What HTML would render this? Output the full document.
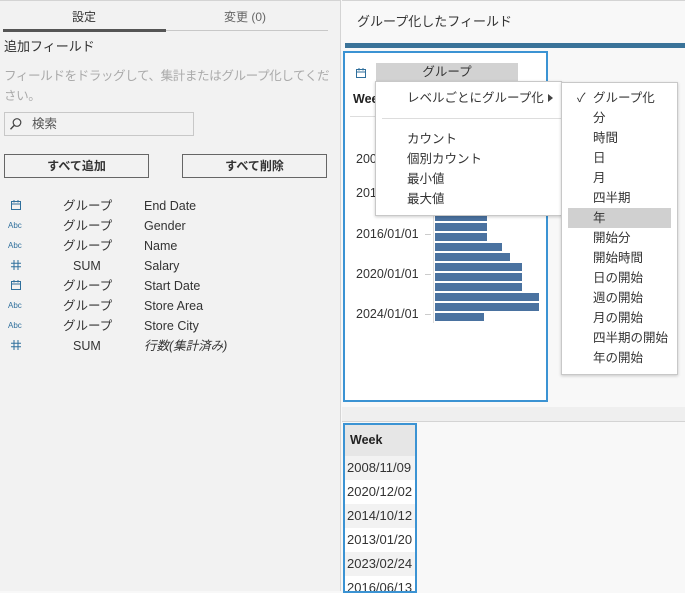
<!DOCTYPE html>
<html><head><meta charset="utf-8"><style>
*{margin:0;padding:0;box-sizing:border-box}
body{width:685px;height:591px;overflow:hidden;position:relative;background:#f8f8f8;font-family:"Liberation Sans","Noto Sans CJK JP",sans-serif;font-size:12px;color:#333}
.a{position:absolute;white-space:nowrap}
.t{line-height:16px}
.f{font-size:12.5px}
</style></head><body>
<div class="a" style="left:0;top:0;width:341px;height:591px;background:#f2f2f2;border-top:1px solid #d4d4d4;border-right:1px solid #d4d4d4"></div>
<div class="a t" style="left:72px;top:9px;color:#333">設定</div>
<div class="a t" style="left:224px;top:9px;color:#666">変更 (0)</div>
<div class="a" style="left:3px;top:29px;width:163px;height:3px;background:#555"></div>
<div class="a" style="left:166px;top:30px;width:162px;height:1px;background:#c8c8c8"></div>
<div class="a t" style="left:4px;top:39px;font-size:13px;color:#333">追加フィールド</div>
<div class="a t" style="left:4px;top:66px;font-size:12.6px;color:#aaa;line-height:20px;letter-spacing:-0.45px">フィールドをドラッグして、集計またはグループ化してくだ<br>さい。</div>
<div class="a" style="left:4px;top:112px;width:190px;height:24px;border:1px solid #c8c8c8;background:#f2f2f2"></div>
<svg class="a" style="left:9px;top:117px" width="14" height="14" viewBox="0 0 14 14"><circle cx="8" cy="5.5" r="3.8" fill="none" stroke="#444" stroke-width="1.2"/><path d="M5.3 8.3 1.5 12.2" stroke="#444" stroke-width="1.4"/></svg>
<div class="a t f" style="left:32px;top:116px;color:#555">検索</div>
<div class="a" style="left:4px;top:154px;width:145px;height:24px;border:1px solid #666;background:#f2f2f2;text-align:center;line-height:22px;font-weight:bold;color:#333">すべて追加</div>
<div class="a" style="left:182px;top:154px;width:145px;height:24px;border:1px solid #666;background:#f2f2f2;text-align:center;line-height:22px;font-weight:bold;color:#333">すべて削除</div>

<svg width="0" height="0" style="position:absolute"><defs>
<symbol id="cal" viewBox="0 0 12 12"><rect x="1.5" y="2.5" width="9" height="8" fill="none" stroke="#2f6f9c" stroke-width="1"/><path d="M1.5 5h9M4 1v2.5M8 1v2.5" stroke="#2f6f9c" stroke-width="1"/></symbol>
<symbol id="hash" viewBox="0 0 12 12"><path d="M4 1v10M8 1v10M1 4.2h10M1 7.8h10" stroke="#2f6f9c" stroke-width="1"/></symbol>
</defs></svg>
<div class="a f" style="left:0;top:197px;width:340px">
<div style="position:relative;height:20px"><svg class="a" style="left:10px;top:2px" width="12" height="12"><use href="#cal"/></svg><span class="a t" style="left:63px;top:1px">グループ</span><span class="a t" style="left:144px;top:1px">End Date</span></div>
<div style="position:relative;height:20px"><span class="a" style="left:8px;top:4px;font-size:8px;color:#2f6f9c">Abc</span><span class="a t" style="left:63px;top:1px">グループ</span><span class="a t" style="left:144px;top:1px">Gender</span></div>
<div style="position:relative;height:20px"><span class="a" style="left:8px;top:4px;font-size:8px;color:#2f6f9c">Abc</span><span class="a t" style="left:63px;top:1px">グループ</span><span class="a t" style="left:144px;top:1px">Name</span></div>
<div style="position:relative;height:20px"><svg class="a" style="left:10px;top:2px" width="12" height="12"><use href="#hash"/></svg><span class="a t" style="left:73px;top:1px">SUM</span><span class="a t" style="left:144px;top:1px">Salary</span></div>
<div style="position:relative;height:20px"><svg class="a" style="left:10px;top:2px" width="12" height="12"><use href="#cal"/></svg><span class="a t" style="left:63px;top:1px">グループ</span><span class="a t" style="left:144px;top:1px">Start Date</span></div>
<div style="position:relative;height:20px"><span class="a" style="left:8px;top:4px;font-size:8px;color:#2f6f9c">Abc</span><span class="a t" style="left:63px;top:1px">グループ</span><span class="a t" style="left:144px;top:1px">Store Area</span></div>
<div style="position:relative;height:20px"><span class="a" style="left:8px;top:4px;font-size:8px;color:#2f6f9c">Abc</span><span class="a t" style="left:63px;top:1px">グループ</span><span class="a t" style="left:144px;top:1px">Store City</span></div>
<div style="position:relative;height:20px"><svg class="a" style="left:10px;top:2px" width="12" height="12"><use href="#hash"/></svg><span class="a t" style="left:73px;top:1px">SUM</span><span class="a t" style="left:144px;top:1px;font-style:italic">行数(集計済み)</span></div>
</div>

<div class="a" style="left:342px;top:0;width:343px;height:1px;background:#d4d4d4"></div>
<div class="a t" style="left:357px;top:14px;font-size:13px">グループ化したフィールド</div>
<div class="a" style="left:345px;top:43px;width:340px;height:5px;background:#3a7399"></div>
<div class="a" style="left:343px;top:51px;width:205px;height:351px;border:2px solid #3b93d3;background:#fff"></div>
<svg class="a" style="left:355px;top:67px" width="12" height="12"><use href="#cal"/></svg>
<div class="a f" style="left:376px;top:63px;width:142px;height:18px;background:#d2d2d2;text-align:center;line-height:18px">グループ</div>
<div class="a t f" style="left:353px;top:91px;font-weight:bold;color:#222">Weel</div>
<div class="a" style="left:350px;top:116px;width:30px;height:1px;background:#ddd"></div>
<div class="a" style="left:433px;top:116px;width:1px;height:207px;background:#ddd"></div>
<div class="a t f" style="left:356px;top:151px">2008/01/01</div>
<div class="a t f" style="left:356px;top:185px">2012/01/01</div>
<div class="a t f" style="left:356px;top:226px">2016/01/01</div>
<div class="a t f" style="left:356px;top:266px">2020/01/01</div>
<div class="a t f" style="left:356px;top:306px">2024/01/01</div>
<div class="a" style="left:425px;top:234px;width:6px;height:1px;background:#ccc"></div>
<div class="a" style="left:425px;top:274px;width:6px;height:1px;background:#ccc"></div>
<div class="a" style="left:425px;top:314px;width:6px;height:1px;background:#ccc"></div>
<div class="a" style="left:435px;top:213px;width:52px;height:8px;background:#4a72a0"></div>
<div class="a" style="left:435px;top:223px;width:52px;height:8px;background:#4a72a0"></div>
<div class="a" style="left:435px;top:233px;width:52px;height:8px;background:#4a72a0"></div>
<div class="a" style="left:435px;top:243px;width:67px;height:8px;background:#4a72a0"></div>
<div class="a" style="left:435px;top:253px;width:75px;height:8px;background:#4a72a0"></div>
<div class="a" style="left:435px;top:263px;width:87px;height:8px;background:#4a72a0"></div>
<div class="a" style="left:435px;top:273px;width:87px;height:8px;background:#4a72a0"></div>
<div class="a" style="left:435px;top:283px;width:87px;height:8px;background:#4a72a0"></div>
<div class="a" style="left:435px;top:293px;width:104px;height:8px;background:#4a72a0"></div>
<div class="a" style="left:435px;top:303px;width:104px;height:8px;background:#4a72a0"></div>
<div class="a" style="left:435px;top:313px;width:49px;height:8px;background:#4a72a0"></div>

<div class="a" style="left:375px;top:81px;width:187px;height:135px;background:#fff;border:1px solid #c8c8c8;box-shadow:0 1px 3px rgba(0,0,0,.2)"></div>
<div class="a t f" style="left:407px;top:90px">レベルごとにグループ化</div>
<div class="a" style="left:548px;top:94px;width:0;height:0;border-left:5px solid #444;border-top:4px solid transparent;border-bottom:4px solid transparent"></div>
<div class="a" style="left:382px;top:118px;width:179px;height:1px;background:#ddd"></div>
<div class="a t f" style="left:407px;top:131px">カウント</div>
<div class="a t f" style="left:407px;top:151px">個別カウント</div>
<div class="a t f" style="left:407px;top:171px">最小値</div>
<div class="a t f" style="left:407px;top:191px">最大値</div>

<div class="a" style="left:561px;top:82px;width:117px;height:293px;background:#fff;border:1px solid #c8c8c8;box-shadow:0 1px 3px rgba(0,0,0,.2)"></div>
<div class="a" style="left:568px;top:208px;width:103px;height:20px;background:#d0d0d0"></div>
<div class="a t f" style="left:577px;top:90px">✓</div>
<div class="a f" style="left:593px;top:88px;line-height:20px">グループ化<br>分<br>時間<br>日<br>月<br>四半期<br>年<br>開始分<br>開始時間<br>日の開始<br>週の開始<br>月の開始<br>四半期の開始<br>年の開始</div>

<div class="a" style="left:342px;top:407px;width:343px;height:15px;background:#efefef;border-bottom:1px solid #d4d4d4"></div>
<div class="a" style="left:343px;top:423px;width:74px;height:170px;border:2px solid #3b93d3;background:#fff;overflow:hidden;font-size:13px">
<div style="height:31px;background:#e6e6e6;font-weight:bold;line-height:31px;padding-left:5px;color:#222;font-size:12.5px">Week</div>
<div style="height:24px;line-height:24px;background:#f2f2f2;padding-left:2px">2008/11/09</div>
<div style="height:24px;line-height:24px;padding-left:2px">2020/12/02</div>
<div style="height:24px;line-height:24px;background:#f2f2f2;padding-left:2px">2014/10/12</div>
<div style="height:24px;line-height:24px;padding-left:2px">2013/01/20</div>
<div style="height:24px;line-height:24px;background:#f2f2f2;padding-left:2px">2023/02/24</div>
<div style="height:24px;line-height:24px;padding-left:2px">2016/06/13</div>
</div>
</body></html>
